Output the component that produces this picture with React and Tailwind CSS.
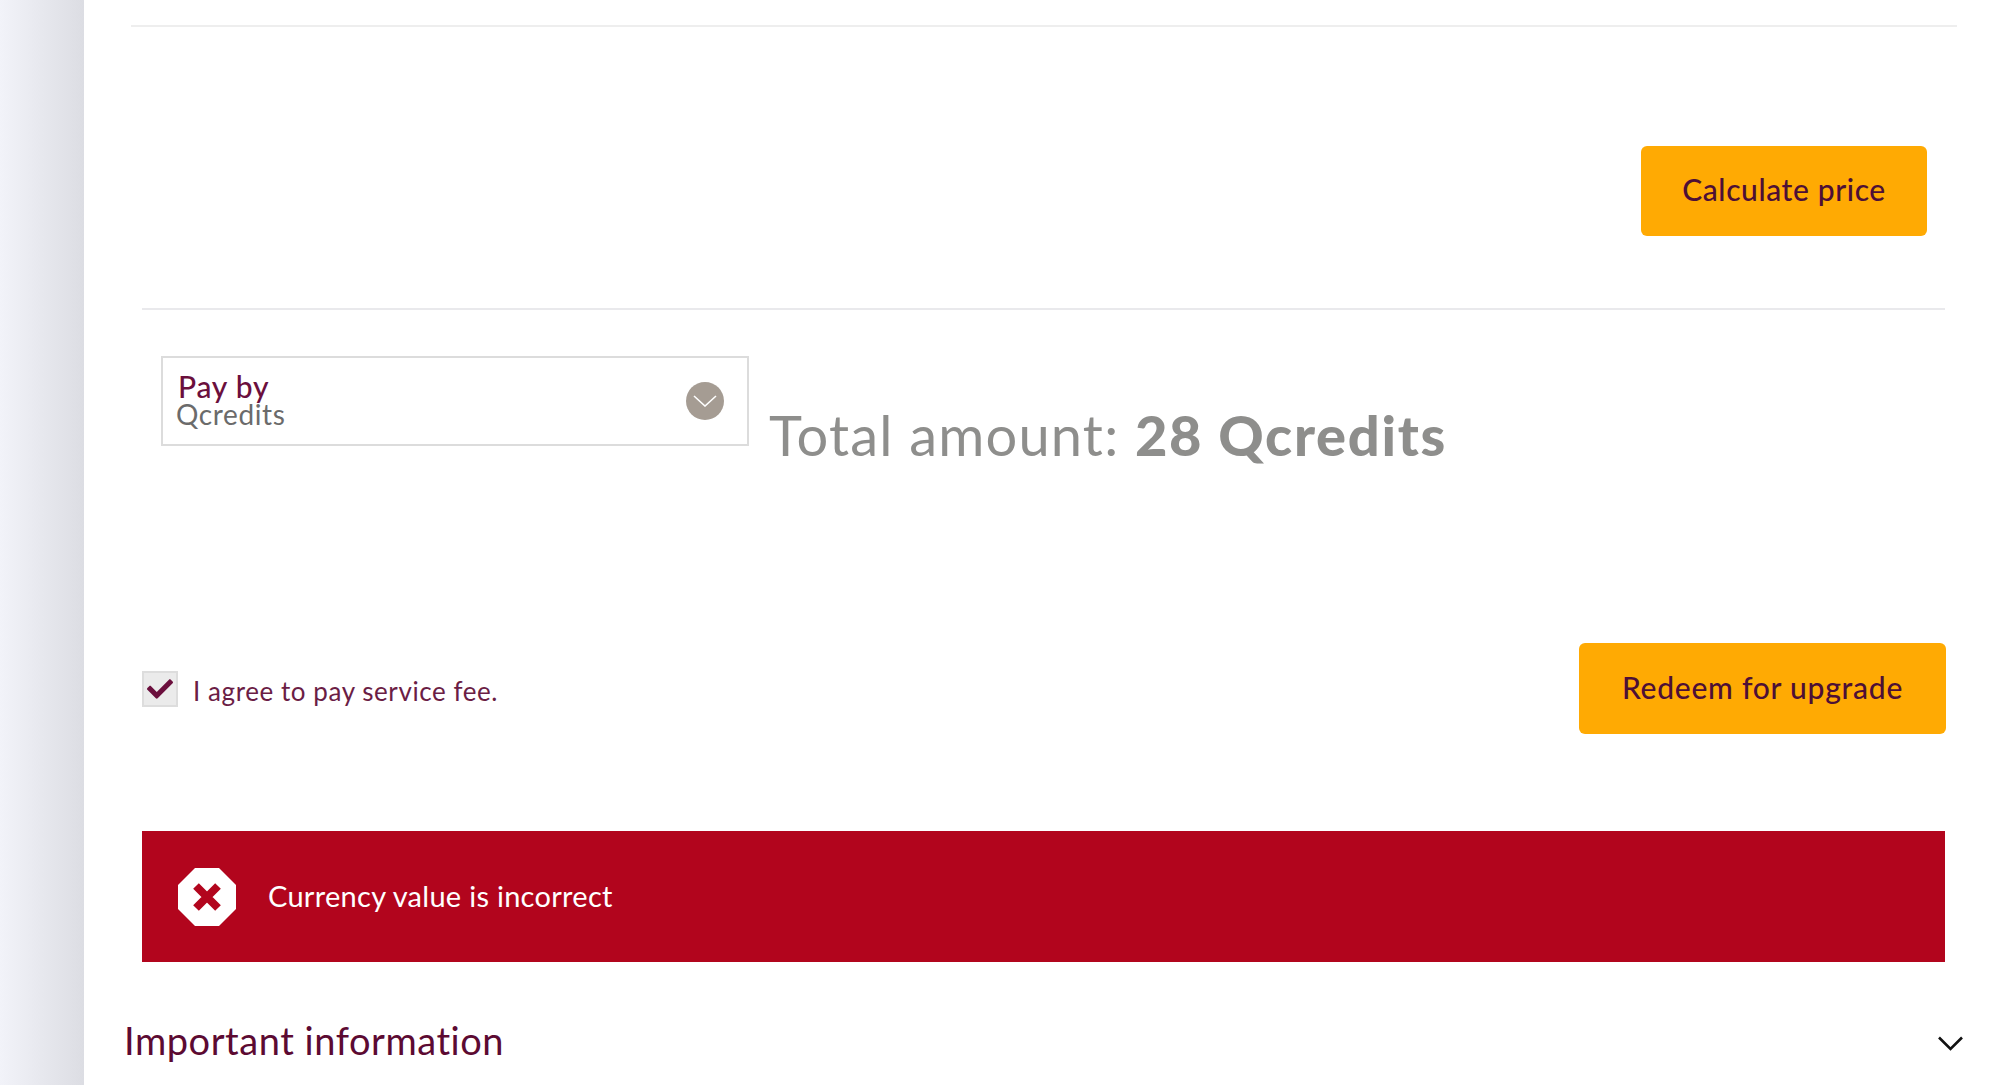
import { FaCheck } from "react-icons/fa";

export default function App() {
  return (
    <div className="flex h-[1085px] overflow-hidden bg-white font-['Lato',sans-serif]">
      <aside className="w-[84px] shrink-0 bg-gradient-to-r from-[#f2f3f9] to-[#dcdde3]" />
      <main className="flex-1 min-w-0">
        <div className="mt-[25px] ml-[47px] mr-[43px] h-[2px] bg-[#eeeeee]" />

        <div className="mt-[119px] pr-[73px] flex justify-end">
          <button className="w-[286px] h-[90px] pb-[3px] rounded-md bg-[#ffaa03] text-[30px] font-medium tracking-[0.6px] text-[#4d0f36]">Calculate price</button>
        </div>

        <div className="mt-[72px] ml-[58px] mr-[55px] h-[2px] bg-[#e9e9ec]" />

        <div className="mt-[46px] ml-[77px] flex items-start">
          <div className="w-[588px] h-[90px] border-2 border-[#dcdcdc] flex items-center justify-between pl-[13px] pr-[23px]">
            <div className="flex flex-col pb-[3px]">
              <span className="ml-[2px] text-[30px] font-medium leading-[28px] tracking-[0.8px] text-[#6b0f3d]">Pay by</span>
              <span className="text-[28px] leading-[28px] tracking-[0.6px] text-[#6b6b6b]">Qcredits</span>
            </div>
            <span className="w-[38px] h-[38px] rounded-full bg-[#a59c93] flex items-center justify-center">
              <svg width="24" height="12" viewBox="0 0 24 12" fill="none" stroke="#fff" strokeWidth="1.6"><path d="M1 1l11 10L23 1" /></svg>
            </span>
          </div>
          <p className="ml-[20px] mt-[47px] text-[56px] leading-[64px] tracking-[1.2px] text-[#8e8e8c] whitespace-nowrap">
            Total amount: <b className="font-black tracking-[1.7px]">28 Qcredits</b>
          </p>
        </div>

        <div className="mt-[176px] ml-[58px] mr-[54px] flex items-center justify-between">
          <label className="flex items-center gap-[15px]">
            <span className="w-[36px] h-[36px] bg-[#ebebeb] border-2 border-[#dddddd] flex items-center justify-center">
              <FaCheck className="text-[26px] text-[#6b0f3d]" />
            </span>
            <span className="mt-[5px] text-[26px] tracking-[0.57px] text-[#6b1d45]">I agree to pay service fee.</span>
          </label>
          <button className="w-[367px] h-[91px] pb-[3px] rounded-md bg-[#ffaa03] text-[30px] font-medium tracking-[0.75px] text-[#4d0f36]">Redeem for upgrade</button>
        </div>

        <div className="mt-[97px] ml-[58px] mr-[55px] h-[131px] bg-[#b2051d] flex items-center pl-[36px] gap-[32px]">
          <svg width="58" height="58" viewBox="0 0 58 58">
            <polygon points="17,0 41,0 58,17 58,41 41,58 17,58 0,41 0,17" fill="#fff" />
            <path d="M18 18l22 22M40 18L18 40" stroke="#b2051d" strokeWidth="8" />
          </svg>
          <span className="pb-[2px] text-[29px] tracking-[0.28px] text-white">Currency value is incorrect</span>
        </div>

        <div className="mt-[52px] ml-[40px] mr-[37px] flex items-center justify-between">
          <h2 className="text-[38px] leading-[52px] tracking-[0.55px] text-[#5c0a32]">Important information</h2>
          <svg className="mt-[7px]" width="25" height="15" viewBox="0 0 25 15" fill="none" stroke="#111" strokeWidth="2.6"><path d="M1 1.5l11.5 11.5L24 1.5" /></svg>
        </div>
      </main>
    </div>
  );
}
